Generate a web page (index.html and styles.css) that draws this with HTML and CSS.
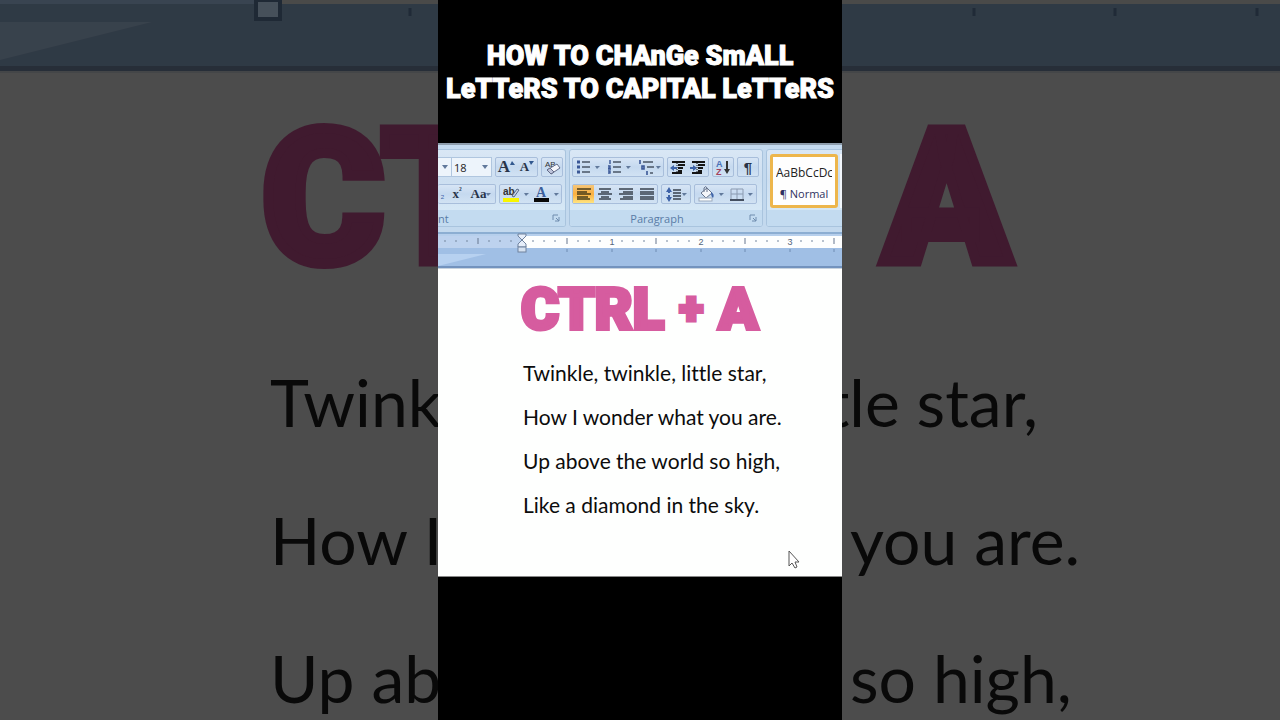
FILE: index.html
```
<!DOCTYPE html>
<html lang="en">
<head>
    <title>How to change small letters to capital letters</title>
    <meta charset="utf-8">
    <meta name="viewport" content="width=device-width, initial-scale=1.0">
    <link rel="stylesheet" href="styles.css">
</head>
<body>
<div class="stage">

    <!-- dimmed enlargement either side of the video -->
    <svg class="backdrop-ruler" viewBox="0 0 1280 73" preserveAspectRatio="none">
        <rect width="1280" height="73" fill="#2f3a45"/>
        <rect width="1280" height="4" fill="#4a4a49"/>
        <rect width="268" height="4" fill="#394451"/>
        <path d="M0 22H152L0 60z" fill="#38424c"/>
        <rect y="66" width="1280" height="5" fill="#272e38"/>
        <rect y="71" width="1280" height="2" fill="#444648"/>
        <rect x="256" y="0" width="24" height="19" fill="#46505a" stroke="#1f2935" stroke-width="4"/>
        <path d="M410 8v8M974 8v8M1115 8v8M1257 8v8" stroke="#202a37" stroke-width="3"/>
    </svg>

    <aside class="side side-left" aria-hidden="true">
        <div class="side-inner">
            <div class="shortcut-big">CT</div>
            <div class="poem-big">
                <p>Twink</p>
                <p>How I</p>
                <p>Up ab</p>
            </div>
        </div>
    </aside>

    <main class="video">
        <header class="title">
            <h1>HOW TO CHAnGe SmALL<br>LeTTeRS TO CAPITAL LeTTeRS</h1>
        </header>

        <div class="ribbon">
            <section class="group font-group">
                <div class="row">
                    <div class="combo">
                        <span class="combo-end"><svg width="6" height="4"><path d="M0 0h6L3 4z"/></svg></span>
                        <select aria-label="Font size"><option>18</option></select>
                        <svg class="combo-arrow" width="6" height="4"><path d="M0 0h6L3 4z"/></svg>
                    </div>
                    <div class="buttons">
                        <button class="w21 serif big" aria-label="Grow font">A<svg class="mark" width="5" height="4"><path d="M0 4h5L2 0z" fill="#31588f"/></svg></button>
                        <button class="w20 serif" aria-label="Shrink font">A<svg class="mark" width="5" height="4"><path d="M0 0h5L2 4z" fill="#31588f"/></svg></button>
                    </div>
                    <div class="buttons">
                        <button class="w20" aria-label="Clear formatting">
                            <svg width="17" height="17" viewBox="0 0 17 17"><text x="1" y="8" font-size="8" font-family="Liberation Sans" fill="#333">AB</text><path d="M3 11l4 4 9-6-3-4z" fill="#f5f6fb" stroke="#626b87"/><path d="M3 11l3-2 4 4-3 2z" fill="#bfc5dc" stroke="#626b87"/></svg>
                        </button>
                    </div>
                </div>
                <div class="row">
                    <div class="buttons open">
                        <button class="w9 sub" aria-label="Subscript">₂</button>
                        <button class="w20 serif" aria-label="Superscript">x<sup>²</sup></button>
                        <button class="w28 serif" aria-label="Change case">Aa<svg class="arrow" width="5" height="3"><path d="M0 0h5L2 3z"/></svg></button>
                    </div>
                    <div class="buttons">
                        <button class="w31" aria-label="Highlight">
                            <svg width="17" height="17" viewBox="0 0 17 17"><text x="0" y="9" font-size="10" font-weight="bold" font-family="Liberation Sans" fill="#333">ab</text><path d="M9 10l5-7 2 1-5 7z" fill="#cad3e4" stroke="#566987"/><rect y="12" width="16" height="4" fill="#f8f500"/></svg>
                            <svg class="arrow" width="5" height="3"><path d="M0 0h5L2 3z"/></svg>
                        </button>
                        <button class="w30" aria-label="Font color">
                            <svg width="17" height="17" viewBox="0 0 17 17"><text x="3" y="11" font-size="14" font-weight="bold" font-family="Liberation Serif" fill="#3d5f9c">A</text><rect x="1" y="12" width="15" height="4" fill="#080808"/></svg>
                            <svg class="arrow" width="5" height="3"><path d="M0 0h5L2 3z"/></svg>
                        </button>
                    </div>
                </div>
                <footer class="caption"><span>nt</span><svg class="launcher" width="8" height="8"><path d="M1 6V1h5M4 4l3 3M7 3v4H3" fill="none" stroke="#6e8cae"/></svg></footer>
            </section>

            <section class="group paragraph-group">
                <div class="row">
                    <div class="buttons">
                        <button class="w31" aria-label="Bullets">
                            <svg width="14" height="14" viewBox="0 0 14 14"><path d="M0 2h3M0 7h3M0 12h3" stroke="#3a5796" stroke-width="3"/><path d="M5 2h8M5 7h8M5 12h8" stroke="#4a5565" stroke-width="1.6"/></svg>
                            <svg class="arrow" width="5" height="3"><path d="M0 0h5L2 3z"/></svg>
                        </button>
                        <button class="w31" aria-label="Numbering">
                            <svg width="14" height="14" viewBox="0 0 14 14"><path d="M2 0v4M0 6h2v2H0v1h3M0 11h2v2H0" fill="none" stroke="#3a5796" stroke-width="1.4"/><path d="M5 2h8M5 7h8M5 12h8" stroke="#4a5565" stroke-width="1.6"/></svg>
                            <svg class="arrow" width="5" height="3"><path d="M0 0h5L2 3z"/></svg>
                        </button>
                        <button class="w28" aria-label="Multilevel list">
                            <svg width="17" height="15" viewBox="0 0 17 15"><path d="M2 0v4M4 6h2v3H4zM9 11v4" fill="none" stroke="#3a5796" stroke-width="1.6"/><path d="M5 2h10M9 7h7M12 13h3" stroke="#4a5565" stroke-width="1.6"/></svg>
                            <svg class="arrow" width="5" height="3"><path d="M0 0h5L2 3z"/></svg>
                        </button>
                    </div>
                    <div class="buttons">
                        <button class="w20" aria-label="Decrease indent">
                            <svg width="16" height="15" viewBox="0 0 16 15"><path d="M2 2h13M8 5h7M8 8h5M8 11h4M2 13h10" stroke="#151515" stroke-width="2"/><path d="M7 1v14" stroke="#111" stroke-dasharray="1 1"/><path d="M0 8l4-3v2h3v2H4v2z" fill="#3e63a8"/></svg>
                        </button>
                        <button class="w20" aria-label="Increase indent">
                            <svg width="16" height="15" viewBox="0 0 16 15"><path d="M2 2h13M8 5h7M8 8h5M8 11h4M2 13h10" stroke="#151515" stroke-width="2"/><path d="M7 1v14" stroke="#111" stroke-dasharray="1 1"/><path d="M7 8L3 5v2H0v2h3v2z" fill="#3e63a8"/></svg>
                        </button>
                    </div>
                    <div class="buttons">
                        <button class="w20" aria-label="Sort">
                            <svg width="16" height="17" viewBox="0 0 16 17"><text x="1" y="8" font-size="9" font-weight="bold" font-family="Liberation Sans" fill="#4870b6">A</text><text x="1" y="16" font-size="9" font-weight="bold" font-family="Liberation Sans" fill="#a4405c">Z</text><path d="M12 2v11" stroke="#333" stroke-width="2"/><path d="M9 10h6l-3 5z" fill="#333"/></svg>
                        </button>
                    </div>
                    <div class="buttons">
                        <button class="w20 pilcrow" aria-label="Show marks">¶</button>
                    </div>
                </div>
                <div class="row">
                    <div class="buttons">
                        <button class="w21 active" aria-label="Align left">
                            <svg width="14" height="13" viewBox="0 0 14 13"><path d="M0 1h14M0 4h10M0 6h14M0 9h11M0 11h13" stroke="#493c18" stroke-width="1.6"/></svg>
                        </button>
                        <button class="w21" aria-label="Center">
                            <svg width="14" height="13" viewBox="0 0 14 13"><path d="M1 1h12M3 4h8M0 6h14M3 9h8M1 11h12" stroke="#39424e" stroke-width="1.6"/></svg>
                        </button>
                        <button class="w21" aria-label="Align right">
                            <svg width="14" height="13" viewBox="0 0 14 13"><path d="M0 1h14M4 4h10M0 6h14M4 9h10M1 11h13" stroke="#39424e" stroke-width="1.6"/></svg>
                        </button>
                        <button class="w21" aria-label="Justify">
                            <svg width="14" height="13" viewBox="0 0 14 13"><path d="M0 1h14M0 4h14M0 6h14M0 9h14M0 11h14" stroke="#39424e" stroke-width="1.6"/></svg>
                        </button>
                    </div>
                    <div class="buttons">
                        <button class="w28" aria-label="Line spacing">
                            <svg width="15" height="15" viewBox="0 0 15 15"><path d="M3 3v9" stroke="#3e63a8" stroke-width="2" stroke-dasharray="3 2"/><path d="M0 5l3-5 3 5zM0 10h6l-3 5z" fill="#3e63a8"/><path d="M7 3h8M7 6h8M7 9h8M7 12h8" stroke="#39424e" stroke-width="1.4"/></svg>
                            <svg class="arrow" width="5" height="3"><path d="M0 0h5L2 3z"/></svg>
                        </button>
                    </div>
                    <div class="buttons">
                        <button class="w31" aria-label="Shading">
                            <svg width="17" height="16" viewBox="0 0 17 16"><path d="M3 7l6-5 5 5-6 5z" fill="#f4f6fa" stroke="#68758c"/><path d="M6 6V2q2-3 3 0v4" fill="none" stroke="#68758c"/><path d="M13 6q4 2 2 6-2-1-2-6z" fill="#3e63a8"/><rect x="1" y="12" width="13" height="3" fill="#fff" stroke="#9baabd"/></svg>
                            <svg class="arrow" width="5" height="3"><path d="M0 0h5L2 3z"/></svg>
                        </button>
                        <button class="w30" aria-label="Borders">
                            <svg width="14" height="13" viewBox="0 0 14 13"><path d="M1 1h12v11M1 1v11M7 1v11M1 6h12" fill="none" stroke="#8b9ab0"/><path d="M0 12h14" stroke="#444f60" stroke-width="2"/></svg>
                            <svg class="arrow" width="5" height="3"><path d="M0 0h5L2 3z"/></svg>
                        </button>
                    </div>
                </div>
                <footer class="caption"><span>Paragraph</span><svg class="launcher" width="8" height="8"><path d="M1 6V1h5M4 4l3 3M7 3v4H3" fill="none" stroke="#6e8cae"/></svg></footer>
            </section>

            <section class="group styles-group">
                <div class="gallery">
                    <button class="style-tile"><span class="sample">AaBbCcDc</span><span class="style-name">¶ Normal</span></button>
                    <span class="next-tile"></span>
                </div>
                <footer class="caption"></footer>
            </section>
        </div>

        <svg class="ruler" viewBox="0 0 404 37">
            <rect width="404" height="37" fill="#a0bfe5"/>
            <rect width="404" height="2" fill="#8caed2"/>
            <rect width="404" height="3" y="2" fill="#b6cfec"/>
            <rect width="84" height="12" y="4" fill="#bdd2ee"/>
            <rect x="84" width="320" height="12" y="4" fill="#fdfefe"/>
            <path d="M0 22h48L0 34z" fill="#b7d1f0"/>
            <rect y="34" width="404" height="2" fill="#7393be"/>
            <rect y="36" width="404" height="1" fill="#c8d3df"/>
            <path d="M7 8v2M18 8v2M29 8v2M51 8v2M62 8v2M73 8v2M95 8v2M106 8v2M117 8v2M140 8v2M151 8v2M162 8v2M184 8v2M195 8v2M206 8v2M229 8v2M240 8v2M251 8v2M274 8v2M285 8v2M296 8v2M318 8v2M329 8v2M340 8v2M363 8v2M374 8v2M385 8v2" stroke="#75879f"/>
            <path d="M40 6v6M129 6v6M218 6v6M307 6v6M396 6v6" stroke="#66778f"/>
            <path d="M129 17v3M174 17v3M218 17v3M263 17v3M307 17v3M352 17v3M396 17v3" stroke="#6e8cb3"/>
            <g font-family="Liberation Sans" font-size="9" fill="#52647b" text-anchor="middle">
                <text x="174" y="13">1</text>
                <text x="263" y="13">2</text>
                <text x="352" y="13">3</text>
            </g>
            <path d="M80 2h8v2l-4 4-4-4zM80 15v-3l4-4 4 4v3z" fill="#e6eefa" stroke="#6f829e"/>
            <rect x="80" y="15" width="8" height="5" fill="#d5e1f0" stroke="#6f829e"/>
        </svg>

        <article class="document">
            <h2 class="shortcut"><span>CTRL</span><span class="plus">+</span><span>A</span></h2>
            <div class="poem">
                <p>Twinkle, twinkle, little star,</p>
                <p>How I wonder what you are.</p>
                <p>Up above the world so high,</p>
                <p>Like a diamond in the sky.</p>
            </div>
            <svg class="cursor" width="12" height="19" viewBox="0 0 12 19"><path d="M1 1v15l3-3 3 5 2-1-2-5h4z" fill="#fff" stroke="#555"/></svg>
        </article>
    </main>

    <aside class="side side-right" aria-hidden="true">
        <div class="side-inner">
            <div class="shortcut-big">A</div>
            <div class="poem-big">
                <p class="cut">tle star,</p>
                <p>you are.</p>
                <p>so high,</p>
            </div>
        </div>
    </aside>
</div>
</body>
</html>
```
FILE: styles.css
```
* {
    box-sizing: border-box;
    margin: 0;
    padding: 0;
}

body {
    background: #4c4c4c;
    font-family: Lato, "Liberation Sans", sans-serif;
    font-variant-ligatures: none;
}

.stage {
    display: grid;
    grid-template-columns: 1fr minmax(0, 404px) 1fr;
    min-height: 100vh;
    overflow: hidden;
}

/* backdrop */
.backdrop-ruler {
    grid-area: 1 / 1 / 2 / 4;
    display: block;
    width: 100%;
    height: 73px;
}

.side {
    grid-row: 1;
    height: 100vh;
    padding-top: 97px;
    overflow: hidden;
}

.side-left {
    grid-column: 1;
}

.side-right {
    grid-column: 3;
}

.side-left .side-inner {
    width: 176px;
    margin-left: auto;
}

.side-right .side-inner {
    width: 196px;
}

.shortcut-big {
    font: 900 186px/202px Roboto, sans-serif;
    -webkit-text-stroke: 10px #401a2f;
    color: #401a2f;
    white-space: nowrap;
}

.side-right .shortcut-big {
    text-align: right;
    padding-right: 28px;
}

.poem-big {
    margin-top: 34px;
    font-size: 66px;
    line-height: 138px;
    color: #090909;
    white-space: nowrap;
}

.side-left .poem-big {
    padding-left: 8px;
}

.side-right .poem-big {
    padding-left: 8px;
}

/* first word runs under the video, so the line hangs from its right end */
.cut {
    display: flex;
    justify-content: flex-end;
}

/* video */
.video {
    grid-row: 1;
    grid-column: 2;
    position: relative;
    display: flex;
    flex-direction: column;
    overflow: hidden;
    background: #000;
}

.title {
    height: 143px;
    padding-top: 40px;
    color: #fff;
}

h1 {
    text-align: center;
    font: 900 27px/33px Roboto, sans-serif;
    -webkit-text-stroke: 1px #fff;
    white-space: nowrap;
}

/* ribbon */
.ribbon {
    display: flex;
    gap: 3px;
    height: 89px;
    padding-top: 4px;
    border-top: 2px solid #8d9cab;
    background: #c3d9ee;
    overflow: hidden;
}

.group {
    display: flex;
    flex-direction: column;
    flex: none;
    height: 78px;
    border: 1px solid #a9c4de;
    border-radius: 3px;
    background: linear-gradient(#d9e7f5 0, #cddff1 30px, #d6e8f6 62px);
    overflow: hidden;
}

.font-group {
    width: 128px;
    border-left: 0;
    border-radius: 0 3px 3px 0;
}

.paragraph-group {
    width: 194px;
}

.styles-group {
    width: 80px;
}

.row {
    display: flex;
    gap: 3px;
    height: 20px;
    margin-top: 7px;
}

.paragraph-group .row {
    padding-left: 2px;
}

.combo {
    display: flex;
    align-items: center;
    width: 54px;
    border: 1px solid #b0c6df;
    border-left: 0;
    background: #edf4fb;
}

.combo-end {
    display: flex;
    align-items: center;
    justify-content: center;
    width: 14px;
    height: 18px;
    border-right: 1px solid #b0c6df;
}

.combo select {
    width: 30px;
    padding-left: 2px;
    border: 0;
    background: none;
    appearance: none;
    font: 11px "Open Sans", sans-serif;
    color: #222;
}

.combo path,
.arrow path {
    fill: #61799b;
}

.buttons {
    display: flex;
    border: 1px solid #a8bedb;
    border-radius: 2px;
    background: linear-gradient(#d7e5f5, #c5d9ef 50%, #d1e2f3);
}

.buttons.open {
    border-left: 0;
}

button {
    display: flex;
    align-items: center;
    justify-content: center;
    gap: 4px;
    border: 0;
    background: none;
    color: #283449;
    white-space: nowrap;
}

.w9 { width: 9px; }
.w20 { width: 20px; }
.w21 { width: 21px; }
.w28 { width: 28px; gap: 1px; }
.w30 { width: 30px; }
.w31 { width: 31px; }

.serif {
    font: bold 13px "Liberation Serif", serif;
    gap: 0;
}

.big {
    font-size: 17px;
}

.serif sup {
    font-size: 9px;
    align-self: flex-start;
}

.sub {
    font: 10px "Liberation Sans", sans-serif;
    color: #3e63a8;
}

.mark {
    align-self: flex-start;
    margin-top: 3px;
}

.pilcrow {
    font: bold 15px "Liberation Sans", sans-serif;
}

.active {
    background: linear-gradient(#f5c67a, #fbb03f 50%, #ffe480);
}

.caption {
    position: relative;
    display: flex;
    align-items: center;
    justify-content: center;
    height: 16px;
    margin-top: auto;
    background: #c3dbf0;
    font: 11px "Open Sans", sans-serif;
    color: #5a7ba6;
}

.paragraph-group .caption {
    padding-right: 18px;
}

.font-group .caption {
    justify-content: flex-start;
}

.launcher {
    position: absolute;
    right: 5px;
    top: 4px;
}

.gallery {
    display: flex;
    gap: 2px;
    padding: 4px 0 0 3px;
}

.style-tile {
    flex: none;
    flex-direction: column;
    width: 68px;
    height: 54px;
    gap: 4px;
    padding: 4px 3px 0;
    border: 3px solid #edb64c;
    border-radius: 3px;
    background: #fefefe;
    overflow: hidden;
}

.sample {
    width: 56px;
    overflow: hidden;
    font: 12px/18px "Open Sans", sans-serif;
    color: #222;
}

.style-name {
    font: 11px/16px "Open Sans", sans-serif;
    color: #2f3261;
}

.next-tile {
    width: 8px;
    height: 54px;
    background: #f2f7fc;
}

.ruler {
    display: block;
    flex: none;
    width: 100%;
    height: 37px;
}

/* document */
.document {
    position: relative;
    height: 308px;
    padding: 8px 0 0 85px;
    border-bottom: 1px solid #888;
    background: #fefffe;
}

.shortcut {
    display: flex;
    justify-content: space-between;
    width: 237px;
    margin-left: -2px;
    font: 900 58px/64px Roboto, sans-serif;
    -webkit-text-stroke: 4px #d65c9f;
    color: #d65c9f;
}

.plus {
    font-size: 44px;
}

.poem {
    margin-top: 10px;
    font-size: 21px;
    line-height: 44px;
    color: #0c0c0c;
    white-space: nowrap;
}

.cursor {
    position: absolute;
    right: 42px;
    bottom: 7px;
}
```
